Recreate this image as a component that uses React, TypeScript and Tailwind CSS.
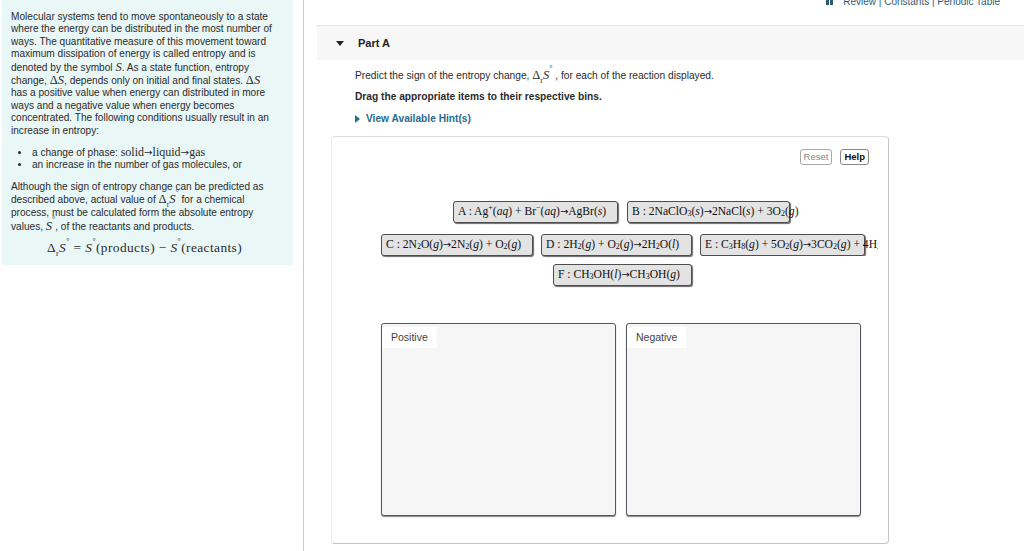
import React from "react";

const serif = "font-['Liberation_Serif','DejaVu_Serif',serif]";

function Sub({ children }: { children: React.ReactNode }) {
  return <sub className="text-[8px] align-[-2px] leading-none">{children}</sub>;
}

function Sup({ children }: { children: React.ReactNode }) {
  return <sup className="text-[8px] align-[4px] leading-none">{children}</sup>;
}

function I({ children }: { children: React.ReactNode }) {
  return <i className="italic">{children}</i>;
}

// arrow glyph from DejaVu, Liberation Serif draws it too small
function Arr() {
  return <span className="font-['DejaVu_Sans',sans-serif] text-[0.85em] leading-none">→</span>;
}

function DrS() {
  return (
    <span className={`${serif} text-[12.5px] leading-none`}>
      Δ<Sub>r</Sub>
      <I>S</I>
      <Sup>°</Sup>
    </span>
  );
}

function Item({ children, width }: { children: React.ReactNode; width: string }) {
  return (
    <div
      className={`h-[22px] shrink-0 flex items-center rounded-[3px] border border-[#4d4d4d] bg-[#e3e3e3] shadow-[1px_1px_1px_#6b6b6b] pl-[4px] whitespace-nowrap text-[11.6px] text-[#111] ${serif} ${width}`}
    >
      {children}
    </div>
  );
}

function Bin({ label }: { label: string }) {
  return (
    <div className="w-[235px] h-[193px] rounded-[3px] border border-[#55585f] bg-[#f6f6f6] shadow-[0_1px_1px_#888]">
      <div className="inline-block bg-white px-[9px] pt-[3px] pb-[2px] text-[10.5px] text-[#444]">
        {label}
      </div>
    </div>
  );
}

export default function App() {
  return (
    <div className="w-[1024px] h-[551px] flex bg-white overflow-hidden font-['Liberation_Sans',Arial,sans-serif] text-[#2b2b2b]">
      {/* Left info panel */}
      <div className="w-[303px] pl-[2px] shrink-0">
        <div className="w-[291px] h-[265px] bg-[#e9f7f7] pl-[9px] pr-[17px] pt-[11px] text-[10.1px] leading-[12.4px]">
          <p>
            Molecular systems tend to move spontaneously to a state where the energy can be distributed in
            the most number of ways. The quantitative measure of this movement toward maximum dissipation of
            energy is called entropy and is denoted by the symbol{" "}
            <span className={`${serif} italic text-[12.5px] leading-none`}>S</span>. As a state function, entropy
            change,{" "}
            <span className={`${serif} text-[12.5px] leading-none`}>
              Δ<I>S</I>
            </span>
            , depends only on initial and final states.{" "}
            <span className={`${serif} text-[12.5px] leading-none`}>
              Δ<I>S</I>
            </span>{" "}
            has a positive value when energy can distributed in more ways and a negative value when energy
            becomes concentrated. The following conditions usually result in an increase in entropy:
          </p>
          <ul className="mt-[9px] pl-[20px] list-disc">
            <li className="pl-[1px]">
              a change of phase:{" "}
              <span className={`${serif} text-[12px] leading-none`}>
                solid
                <Arr />
                liquid
                <Arr />
                gas
              </span>
            </li>
            <li className="pl-[1px]">an increase in the number of gas molecules, or</li>
          </ul>
          <p className="mt-[9px]">
            Although the sign of entropy change can be predicted as described above, actual value of <DrS />{" "}
            for a chemical process, must be calculated form the absolute entropy values,{" "}
            <span className={`${serif} text-[12.5px] leading-none`}>
              <I>S</I>
              <Sup>°</Sup>
            </span>
            , of the reactants and products.
          </p>
          <p className={`mt-[9px] pl-[36px] ${serif} text-[13.4px] tracking-[0.4px] whitespace-nowrap`}>
            Δ<Sub>r</Sub>
            <I>S</I>
            <Sup>°</Sup> = <I>S</I>
            <Sup>°</Sup>(products) − <I>S</I>
            <Sup>°</Sup>(reactants)
          </p>
        </div>
      </div>

      {/* Divider */}
      <div className="w-px h-full bg-[#c3cad6] shrink-0" />

      {/* Right column */}
      <div className="flex-1 pl-[13px] flex flex-col">
        <div className="h-[25px] flex justify-end pr-[24px]">
          <div className="flex items-center gap-[10px] -mt-[23px] text-[10px] text-[#2c5c74]">
            <span className="w-[7px] h-[7px] bg-[#2c5c74] flex">
              <span className="w-px h-full bg-white ml-[3px]" />
            </span>
            <span>Review | Constants | Periodic Table</span>
          </div>
        </div>

        <div className="h-[35px] bg-[#f7f7f7] border-t border-[#e6e6e6] flex items-center pl-[19px] gap-[14px]">
          <span className="w-0 h-0 border-l-[4px] border-r-[4px] border-t-[5px] border-l-transparent border-r-transparent border-t-[#222]" />
          <span className="text-[11px] font-bold text-[#222]">Part A</span>
        </div>

        <div className="pl-[38px] pt-[9px] text-[10.2px] text-[#2b2b2b]">
          <p className="leading-[13px]">
            Predict the sign of the entropy change, <DrS /> , for each of the reaction displayed.
          </p>
          <p className="mt-[8px] font-bold leading-[12px]">Drag the appropriate items to their respective bins.</p>
          <p className="mt-[10px] flex items-center gap-[6px] font-bold text-[#2a6b8c] leading-[12px]">
            <span className="w-0 h-0 border-t-[4px] border-b-[4px] border-l-[5px] border-t-transparent border-b-transparent border-l-[#2a6b8c]" />
            View Available Hint(s)
          </p>
        </div>

        <div className="ml-[14px] mt-[11px] w-[558px] h-[408px] rounded-[4px] border border-[#c4c4c4] border-l-[#eeeeee] border-t-[#dddddd] flex flex-col">
          <div className="flex justify-end gap-[8px] pr-[19px] pt-[12px]">
            <button className="h-[16px] px-[3px] rounded-[3px] border border-[#aaa] text-[9.5px] text-[#888] bg-white">
              Reset
            </button>
            <button className="h-[16px] px-[3px] rounded-[3px] border border-[#888] text-[9.5px] font-bold text-[#111] bg-white">
              Help
            </button>
          </div>

          <div className="mt-[36px] flex flex-col items-start text-[#111]">
            <div className="flex gap-[9px] ml-[121px]">
              <Item width="w-[165px]">
                A : Ag<Sup>+</Sup>(<I>aq</I>) + Br<Sup>−</Sup>(<I>aq</I>)
                <Arr />
                AgBr(<I>s</I>)
              </Item>
              <Item width="w-[163px]">
                B : 2NaClO<Sub>3</Sub>(<I>s</I>)
                <Arr />
                2NaCl(<I>s</I>) + 3O<Sub>2</Sub>(<I>g</I>)
              </Item>
            </div>
            <div className="flex gap-[8px] ml-[49px] mt-[11px]">
              <Item width="w-[152px]">
                C : 2N<Sub>2</Sub>O(<I>g</I>)
                <Arr />
                2N<Sub>2</Sub>(<I>g</I>) + O<Sub>2</Sub>(<I>g</I>)
              </Item>
              <Item width="w-[151px]">
                D : 2H<Sub>2</Sub>(<I>g</I>) + O<Sub>2</Sub>(<I>g</I>)
                <Arr />
                2H<Sub>2</Sub>O(<I>l</I>)
              </Item>
              <div className="w-[178px] overflow-hidden">
                <Item width="w-[165px]">
                  E : C<Sub>3</Sub>H<Sub>8</Sub>(<I>g</I>) + 5O<Sub>2</Sub>(<I>g</I>)
                  <Arr />
                  3CO<Sub>2</Sub>(<I>g</I>) + 4H<Sub>2</Sub>O(<I>g</I>)
                </Item>
              </div>
            </div>
            <div className="flex ml-[221px] mt-[8px]">
              <Item width="w-[139px]">
                F : CH<Sub>3</Sub>OH(<I>l</I>)
                <Arr />
                CH<Sub>3</Sub>OH(<I>g</I>)
              </Item>
            </div>
          </div>

          <div className="mt-[37px] flex gap-[10px] pl-[49px]">
            <Bin label="Positive" />
            <Bin label="Negative" />
          </div>
        </div>
      </div>
    </div>
  );
}
